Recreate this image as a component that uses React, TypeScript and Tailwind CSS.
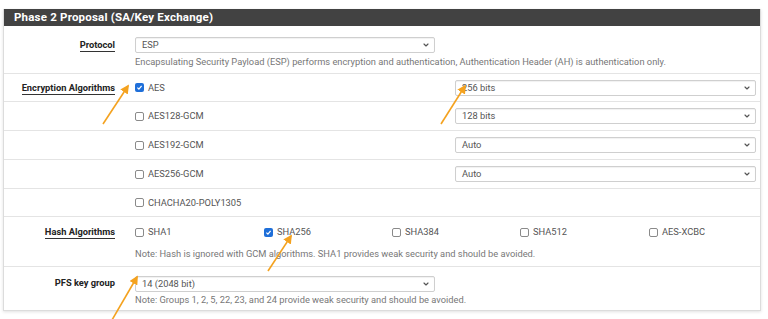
import { ChevronDown } from "lucide-react";

const font = { fontFamily: "Roboto, 'Liberation Sans', sans-serif" };

function Box({ checked }: { checked?: boolean }) {
    return checked ? (
        <span className="inline-flex h-[9px] w-[9px] shrink-0 items-center justify-center rounded-[2px] bg-[#1f6fd9]">
            <svg viewBox="0 0 10 10" className="h-[7px] w-[7px]">
                <path d="M2 5.2 L4.2 7.3 L8 2.8" fill="none" stroke="#fff" strokeWidth="1.8" />
            </svg>
        </span>
    ) : (
        <span className="inline-block h-[9px] w-[9px] shrink-0 rounded-[2px] border border-[#8a8a8a] bg-white" />
    );
}

function Select({ value, width }: { value: string; width: string }) {
    return (
        <div className={`flex h-[16px] ${width} items-center justify-between rounded-[2px] border border-[#cfcfcf] bg-white pl-[6px] pr-[4px] text-[9.3px] text-[#555] shadow-[inset_0_1px_1px_rgba(0,0,0,0.06)]`}>
            <span>{value}</span>
            <ChevronDown size={8} strokeWidth={3.5} className="text-[#555]" />
        </div>
    );
}

function Label({ text, underline = true }: { text: string; underline?: boolean }) {
    return (
        <div className="w-[111px] shrink-0 text-right text-[9.3px] font-bold leading-[14px] text-[#222]">
            <span className={underline ? "border-b border-[#333] pb-[1px]" : ""}>{text}</span>
        </div>
    );
}

function Check({ name, checked }: { name: string; checked?: boolean }) {
    return (
        <div className="flex items-center gap-[4px] text-[9.3px] text-[#555]">
            <Box checked={checked} />
            <span>{name}</span>
        </div>
    );
}

const encRows = [
    { name: "AES", checked: true, bits: "256 bits" },
    { name: "AES128-GCM", bits: "128 bits" },
    { name: "AES192-GCM", bits: "Auto" },
    { name: "AES256-GCM", bits: "Auto" },
    { name: "CHACHA20-POLY1305" },
];

const hashes = [
    { name: "SHA1" },
    { name: "SHA256", checked: true },
    { name: "SHA384" },
    { name: "SHA512" },
    { name: "AES-XCBC" },
];

export default function App() {
    return (
        <div className="relative h-[319px] w-[768px] overflow-hidden bg-white pl-[3px] pt-[9px]" style={font}>
            <div className="w-[758px] border border-t-0 border-[#dcdcdc] bg-white shadow-[0_1px_3px_rgba(0,0,0,0.12)]">
                {/* heading */}
                <div className="flex h-[17px] items-center bg-[#424242] pl-[10px] text-[11.5px] font-bold tracking-[0.2px] text-white">
                    Phase 2 Proposal (SA/Key Exchange)
                </div>

                {/* Protocol */}
                <div className="flex pt-[11px] pb-[6px]">
                    <div className="pt-[1px]">
                        <Label text="Protocol" />
                    </div>
                    <div className="pl-[20px]">
                        <Select value="ESP" width="w-[300px]" />
                        <p className="mt-[4px] text-[9.3px] leading-[10px] text-[#777]">
                            Encapsulating Security Payload (ESP) performs encryption and authentication, Authentication Header (AH) is authentication only.
                        </p>
                    </div>
                </div>

                {/* Encryption */}
                {encRows.map((row, i) => (
                    <div
                        key={row.name}
                        className={`flex items-center border-t border-[#e4e4e4] ${i === 0 || i === 4 ? "h-[28px]" : "h-[29px]"}`}
                    >
                        {i === 0 ? <Label text="Encryption Algorithms" /> : <div className="w-[111px] shrink-0" />}
                        <div className="flex flex-1 items-center pl-[20px] pr-[3px]">
                            <div className="w-[320px]">
                                <Check name={row.name} checked={row.checked} />
                            </div>
                            {row.bits && <Select value={row.bits} width="w-[301px]" />}
                        </div>
                    </div>
                ))}

                {/* Hash */}
                <div className="flex border-t border-[#e4e4e4] pt-[8px] pb-[7px]">
                    <Label text="Hash Algorithms" />
                    <div className="pl-[20px]">
                        <div className="grid h-[14px] grid-cols-[129px_128px_128px_129px_100px] items-center">
                            {hashes.map((h) => (
                                <Check key={h.name} name={h.name} checked={h.checked} />
                            ))}
                        </div>
                        <p className="mt-[10px] text-[9.3px] leading-[10px] text-[#777]">
                            Note: Hash is ignored with GCM algorithms. SHA1 provides weak security and should be avoided.
                        </p>
                    </div>
                </div>

                {/* PFS */}
                <div className="flex border-t border-[#e4e4e4] pt-[9px] pb-[5px]">
                    <Label text="PFS key group" underline={false} />
                    <div className="pl-[20px]">
                        <Select value="14 (2048 bit)" width="w-[300px]" />
                        <p className="mt-[3px] text-[9.3px] leading-[10px] text-[#777]">
                            Note: Groups 1, 2, 5, 22, 23, and 24 provide weak security and should be avoided.
                        </p>
                    </div>
                </div>
            </div>

            {/* annotation arrows */}
            <svg className="pointer-events-none absolute left-0 top-0" width="768" height="319" viewBox="0 0 768 319">
                <defs>
                    <marker id="head" viewBox="0 0 10 10" refX="8" refY="5" markerWidth="9" markerHeight="9" markerUnits="userSpaceOnUse" orient="auto">
                        <path d="M0 0 L10 5 L0 10 z" fill="#f4a21f" />
                    </marker>
                </defs>
                <g stroke="#f4a21f" strokeWidth="1.6" markerEnd="url(#head)">
                    <line x1="103" y1="124" x2="128" y2="86" />
                    <line x1="441" y1="124" x2="465" y2="86" />
                    <line x1="268" y1="271" x2="291" y2="236" />
                    <line x1="112" y1="320" x2="137" y2="277" />
                </g>
            </svg>
        </div>
    );
}
